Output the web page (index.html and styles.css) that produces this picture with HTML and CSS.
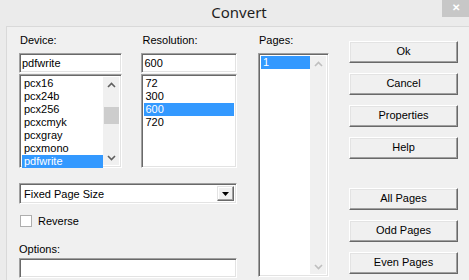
FILE: index.html
```html
<!DOCTYPE html>
<html>
<head>
<meta charset="utf-8">
<link rel="stylesheet" href="styles.css">
</head>
<body>
<div class="window">
  <div class="titlebar">
    <div class="title">Convert</div>
    <div class="close">&#x2715;</div>
  </div>
  <div class="client">
    <div class="leftblock">
      <div class="lists">
        <div class="col col-device">
          <div class="label">Device:</div>
          <div class="edit">pdfwrite</div>
          <div class="listbox device-list">
            <div class="items">
              <div class="item">pcx16</div>
              <div class="item">pcx24b</div>
              <div class="item">pcx256</div>
              <div class="item">pcxcmyk</div>
              <div class="item">pcxgray</div>
              <div class="item">pcxmono</div>
              <div class="item sel">pdfwrite</div>
            </div>
            <div class="vscroll">
              <svg class="arrow" width="15" height="15" viewBox="0 0 15 15"><polyline points="4,9 7.5,5.5 11,9" fill="none" stroke="#606060" stroke-width="1.6"/></svg>
              <div class="track"><div class="thumb"></div></div>
              <svg class="arrow" width="15" height="15" viewBox="0 0 15 15"><polyline points="4,6 7.5,9.5 11,6" fill="none" stroke="#606060" stroke-width="1.6"/></svg>
            </div>
          </div>
        </div>
        <div class="col col-res">
          <div class="label">Resolution:</div>
          <div class="edit">600</div>
          <div class="listbox res-list">
            <div class="items">
              <div class="item">72</div>
              <div class="item">300</div>
              <div class="item sel">600</div>
              <div class="item">720</div>
            </div>
          </div>
        </div>
      </div>
      <div class="combo">
        <div class="combo-text">Fixed Page Size</div>
        <div class="combo-btn"><svg width="7" height="4" viewBox="0 0 7 4"><polygon points="0,0 7,0 3.5,4" fill="#000"/></svg></div>
      </div>
      <div class="check-row">
        <div class="checkbox"></div>
        <span>Reverse</span>
      </div>
      <div class="label opt-label">Options:</div>
      <div class="edit opt-edit"></div>
    </div>
    <div class="col col-pages">
      <div class="label">Pages:</div>
      <div class="listbox pages-list">
        <div class="items">
          <div class="item sel">1</div>
        </div>
        <div class="vscroll disabled">
          <svg class="arrow" width="15" height="15" viewBox="0 0 15 15"><polyline points="4,9 7.5,5.5 11,9" fill="none" stroke="#bfbfbf" stroke-width="1.6"/></svg>
          <div class="track"></div>
          <svg class="arrow" width="15" height="15" viewBox="0 0 15 15"><polyline points="4,6 7.5,9.5 11,6" fill="none" stroke="#bfbfbf" stroke-width="1.6"/></svg>
        </div>
      </div>
    </div>
    <div class="buttons">
      <div class="btn">Ok</div>
      <div class="btn">Cancel</div>
      <div class="btn">Properties</div>
      <div class="btn">Help</div>
      <div class="btn group2">All Pages</div>
      <div class="btn">Odd Pages</div>
      <div class="btn">Even Pages</div>
    </div>
  </div>
</div>
</body>
</html>
```
FILE: styles.css
```css
* { box-sizing: border-box; }
html, body { margin: 0; padding: 0; }
body {
  width: 469px;
  height: 280px;
  overflow: hidden;
  background: #ebebeb;
  font-family: "Liberation Sans", Arial, sans-serif;
  font-size: 11px;
  color: #000;
}
.window { width: 469px; height: 280px; display: flex; flex-direction: column; }
.titlebar {
  height: 26px;
  flex: none;
  display: flex;
  align-items: flex-start;
  justify-content: center;
  position: relative;
}
.title {
  font-family: "Noto Sans", "Open Sans", sans-serif;
  font-size: 15px;
  line-height: 24px;
  color: #1e1e1e;
  padding-left: 9px;
}
.close {
  position: absolute;
  right: 0;
  top: 0;
  width: 27px;
  height: 17px;
  background: #c7c7c7;
  color: #fff;
  font-size: 10px;
  font-weight: bold;
  line-height: 16px;
  text-align: center;
}
.client {
  flex: 1;
  margin-left: 6px;
  border-top: 1px solid #d9d9d9;
  border-left: 1px solid #d9d9d9;
  background: #f0f0f0;
  padding: 7px 0 0 12px;
  display: flex;
  align-items: flex-start;
}
.leftblock { width: 218px; display: flex; flex-direction: column; }
.lists { display: flex; }
.col { display: flex; flex-direction: column; }
.col-device { width: 104px; }
.col-res { width: 96px; margin-left: 19px; }
.col-pages { width: 71px; margin-left: 21px; }
.label { line-height: 13px; height: 13px; margin-bottom: 6px; padding-left: 1px; }
.edit, .listbox, .combo {
  background: #fff;
  border-top: 1px solid #a0a0a0;
  border-left: 1px solid #a0a0a0;
  border-bottom: 1px solid #fff;
  border-right: 1px solid #fff;
  box-shadow: inset 1px 1px 0 #696969, inset -1px -1px 0 #e3e3e3;
}
.edit {
  height: 20px;
  line-height: 16px;
  padding: 1px 2px;
}
.listbox {
  margin-top: 1px;
  height: 94px;
  padding: 2px 2px 2px 2px;
  display: flex;
}
.items { flex: 1; }
.item { height: 13px; line-height: 13px; padding-left: 2px; }
.res-list .item { padding-left: 1px; }
.item.sel { background: #3399ff; color: #fff; }
.vscroll {
  width: 16px;
  background: #f0f0f0;
  display: flex;
  flex-direction: column;
  align-items: center;
}
.vscroll .arrow { display: block; flex: none; margin-top: 1px; }
.track { flex: 1; width: 100%; position: relative; }
.thumb {
  position: absolute;
  left: 1px;
  right: 0;
  top: 14px;
  height: 17px;
  background: #cdcdcd;
}
.pages-list { height: 224px; margin-top: 0; }
.combo {
  margin-top: 15px;
  height: 21px;
  display: flex;
  padding: 2px;
}
.combo-text { flex: 1; line-height: 16px; padding-left: 2px; }
.combo-btn {
  width: 17px;
  background: #f0f0f0;
  border-top: 1px solid #e3e3e3;
  border-left: 1px solid #e3e3e3;
  border-right: 1px solid #696969;
  border-bottom: 1px solid #696969;
  box-shadow: inset -1px -1px 0 #a0a0a0, inset 1px 1px 0 #fff;
  display: flex;
  align-items: center;
  justify-content: center;
}
.check-row {
  margin-top: 10px;
  height: 13px;
  display: flex;
  align-items: center;
  padding-left: 1px;
}
.checkbox {
  width: 12px;
  height: 12px;
  background: #fff;
  border: 1px solid #aeaeae;
  margin-right: 6px;
}
.opt-label { margin-top: 16px; margin-bottom: 2px; padding-left: 0; }
.opt-edit { width: 218px; }
.buttons {
  margin-left: 20px;
  width: 109px;
  padding-top: 7px;
  display: flex;
  flex-direction: column;
  gap: 10px;
}
.btn {
  height: 22px;
  background: #f0f0f0;
  border-top: 1px solid #fff;
  border-left: 1px solid #fff;
  border-right: 1px solid #696969;
  border-bottom: 1px solid #696969;
  box-shadow: inset -1px -1px 0 #a0a0a0, inset 1px 1px 0 #e3e3e3;
  text-align: center;
  line-height: 19px;
}
.btn.group2 { margin-top: 19px; }
```
